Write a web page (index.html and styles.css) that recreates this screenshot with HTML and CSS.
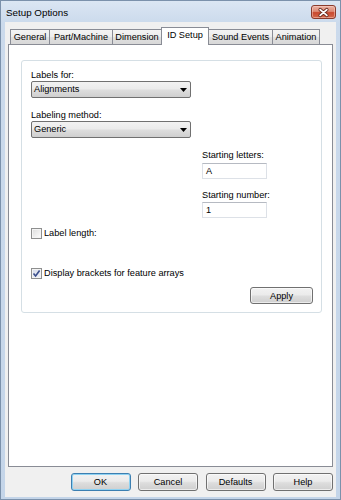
FILE: index.html
```html
<!DOCTYPE html>
<html>
<head>
<meta charset="utf-8">
<link rel="stylesheet" href="styles.css">
</head>
<body>
<div class="window">
  <div class="titlebar">
    <span class="title">Setup Options</span>
    <button class="close" aria-label="Close">
      <svg width="24" height="13" viewBox="0 0 24 13">
        <path d="M8.5 3.5 L15.5 9.5 M15.5 3.5 L8.5 9.5" stroke="#6a2c20" stroke-width="3.6" stroke-linecap="round" fill="none"/>
        <path d="M8.5 3.5 L15.5 9.5 M15.5 3.5 L8.5 9.5" stroke="#ffffff" stroke-width="1.8" stroke-linecap="round" fill="none"/>
      </svg>
    </button>
  </div>
  <div class="client">
    <div class="tabs">
      <div class="tab tab-general">General</div>
      <div class="tab tab-part">Part/Machine</div>
      <div class="tab tab-dim">Dimension</div>
      <div class="tab tab-id selected">ID Setup</div>
      <div class="tab tab-sound">Sound Events</div>
      <div class="tab tab-anim">Animation</div>
    </div>
    <div class="panel">
      <div class="group">
        <div class="label">Labels for:</div>
        <div class="select">
          <span>Alignments</span>
          <svg class="arrow" width="7" height="4" viewBox="0 0 7 4"><path d="M0 0 H7 L3.5 4 Z" fill="#000"/></svg>
        </div>
        <div class="label label-gap">Labeling method:</div>
        <div class="select">
          <span>Generic</span>
          <svg class="arrow" width="7" height="4" viewBox="0 0 7 4"><path d="M0 0 H7 L3.5 4 Z" fill="#000"/></svg>
        </div>
        <div class="start-col">
          <div class="label">Starting letters:</div>
          <div class="textbox first">A</div>
          <div class="label label-num">Starting number:</div>
          <div class="textbox">1</div>
        </div>
        <div class="check-row row-length">
          <span class="checkbox"></span>
          <span>Label length:</span>
        </div>
        <div class="check-row row-brackets">
          <span class="checkbox checked">
            <svg width="9" height="9" viewBox="0 0 9 9"><path d="M1.5 4.5 L3.6 7 L7.6 1.5" stroke="#3a4e8c" stroke-width="1.6" fill="none"/></svg>
          </span>
          <span>Display brackets for feature arrays</span>
        </div>
        <div class="apply-row">
          <button class="btn apply">Apply</button>
        </div>
      </div>
    </div>
    <div class="footer">
      <button class="btn default">OK</button>
      <button class="btn">Cancel</button>
      <button class="btn">Defaults</button>
      <button class="btn">Help</button>
    </div>
  </div>
</div>
</body>
</html>
```
FILE: styles.css
```css
* {
  box-sizing: border-box;
}

html, body {
  margin: 0;
  padding: 0;
  background: #ffffff;
}

body {
  font-family: "Liberation Sans", Arial, sans-serif;
  font-size: 9.2px;
  line-height: 11px;
  color: #000000;
}

.window {
  width: 341px;
  height: 500px;
  border: 1px solid #7b91ab;
  background: linear-gradient(#dbe6f3 0px, #cbdaec 22px, #c4d5e9 100%);
  display: flex;
  flex-direction: column;
}

.titlebar {
  height: 21px;
  display: flex;
  align-items: center;
  justify-content: space-between;
  padding: 0 4px 0 5px;
}

.title {
  font-size: 9.8px;
  color: #000000;
  margin-top: 1px;
}

.close {
  width: 25px;
  height: 14px;
  padding: 0;
  margin-top: 1px;
  border: 1px solid #8a3b2c;
  border-radius: 3px;
  background: linear-gradient(#eab2a4 0%, #dd8a75 45%, #c9492f 55%, #d4694c 100%);
  box-shadow: inset 0 0 0 1px rgba(255, 220, 210, 0.45);
  display: flex;
  align-items: center;
  justify-content: center;
}

.close svg {
  display: block;
}

.client {
  margin: 0 4px 0 4px;
  height: 475px;
  background: #f0f0f0;
  padding: 5px 3px 0 3px;
  display: flex;
  flex-direction: column;
}

.tabs {
  height: 17px;
  display: flex;
  align-items: flex-end;
  padding-left: 2px;
}

.tab {
  height: 15px;
  border: 1px solid #898c95;
  border-bottom: none;
  margin-left: -1px;
  background: linear-gradient(#f4f4f4 0%, #ececec 50%, #e0e0e0 51%, #d8d8d8 100%);
  display: flex;
  align-items: center;
  justify-content: center;
  white-space: nowrap;
  padding-top: 1px;
}

.tab:first-child {
  margin-left: 0;
}

.tab-general { width: 40px; }
.tab-part { width: 64px; }
.tab-dim { width: 50px; }
.tab-id { width: 48px; }
.tab-sound { width: 65px; }
.tab-anim { width: 48px; }

.tab.selected {
  height: 18px;
  margin-bottom: -1px;
  background: #ffffff;
  position: relative;
  z-index: 1;
  align-items: flex-start;
  padding-top: 2px;
}

.panel {
  height: 423px;
  border: 1px solid #898c95;
  background: #ffffff;
}

.group {
  margin: 15px 10px 0 12px;
  border: 1px solid #d5dfe5;
  border-radius: 3px;
  padding: 9px 8px 8px 9px;
  display: flex;
  flex-direction: column;
}

.label {
  height: 11px;
  white-space: nowrap;
}

.label-gap {
  margin-top: 12px;
}

.select {
  width: 160px;
  height: 17px;
  border: 1px solid #707070;
  border-radius: 2px;
  background: linear-gradient(#f2f2f2 0%, #ebebeb 45%, #dddddd 55%, #cfcfcf 100%);
  display: flex;
  align-items: center;
  justify-content: space-between;
  padding: 0 3px 0 2px;
}

.arrow {
  display: block;
}

.start-col {
  margin-left: 171px;
  margin-top: 12px;
  display: flex;
  flex-direction: column;
}

.textbox {
  width: 65px;
  height: 16px;
  border: 1px solid #dde1e7;
  border-top-color: #b6bac2;
  background: #ffffff;
  padding-left: 3px;
  display: flex;
  align-items: center;
}

.textbox.first {
  margin-top: 2px;
}

.label-num {
  margin-top: 11px;
  margin-bottom: 1px;
}

.check-row {
  height: 13px;
  display: flex;
  align-items: center;
  gap: 2px;
  white-space: nowrap;
}

.row-length {
  margin-top: 9px;
}

.row-brackets {
  margin-top: 27px;
}

.checkbox {
  width: 11px;
  height: 11px;
  border: 1px solid #8e8f8f;
  background: linear-gradient(135deg, #dcdcdc 0%, #f4f4f4 70%, #ffffff 100%);
  box-shadow: inset 0 0 0 1px #f4f4f4;
  display: flex;
  align-items: center;
  justify-content: center;
}

.checkbox.checked {
  background: linear-gradient(135deg, #d7dcea 0%, #eef0f7 100%);
}

.checkbox svg {
  display: block;
}

.apply-row {
  display: flex;
  justify-content: flex-end;
  margin-top: 7px;
}

.btn {
  font-family: "Liberation Sans", Arial, sans-serif;
  font-size: 9.2px;
  color: #000000;
  height: 18px;
  width: 60px;
  padding: 0;
  border: 1px solid #707070;
  border-radius: 3px;
  background: linear-gradient(#f2f2f2 0%, #ebebeb 45%, #dddddd 55%, #cfcfcf 100%);
  box-shadow: inset 0 0 0 1px rgba(255, 255, 255, 0.6);
}

.btn.apply {
  width: 63px;
  height: 17px;
}

.btn.default {
  border-color: #3c7fb1;
  box-shadow: inset 0 0 0 1px #8fd2f2;
}

.footer {
  display: flex;
  justify-content: flex-end;
  gap: 7.5px;
  margin-top: 6px;
}
```
